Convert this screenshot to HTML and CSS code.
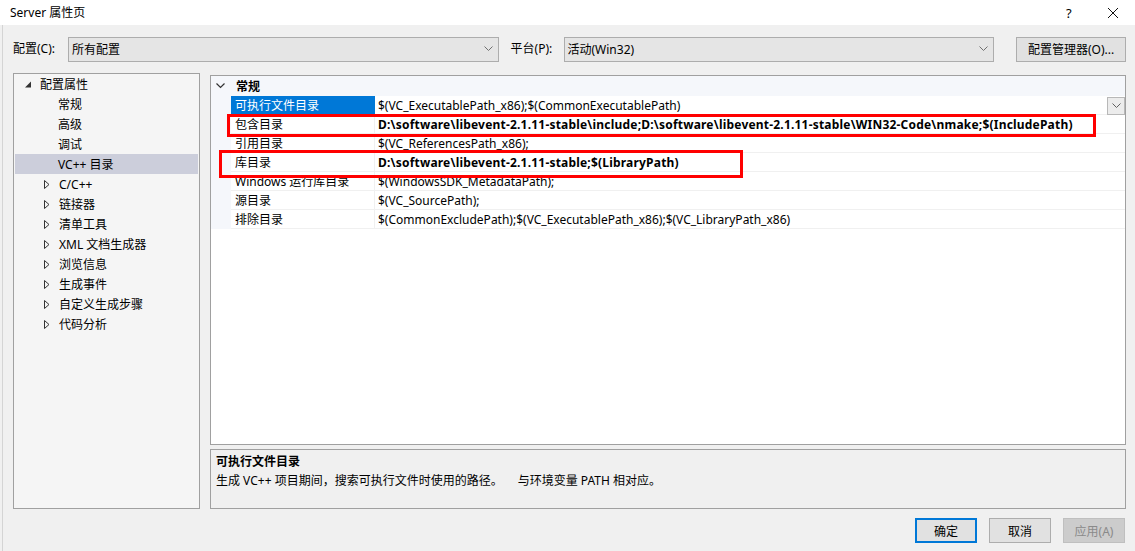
FILE: index.html
```html
<!DOCTYPE html>
<html lang="zh-CN">

<head>
    <meta charset="UTF-8">
    <title>Server 属性页</title>
    <link rel="stylesheet" href="styles.css">
</head>

<body>
    <div class="titlebar">
        <span class="title">Server 属性页</span>
        <span class="help">?</span>
        <span class="close">
            <svg width="12" height="12" viewBox="0 0 12 12"><path d="M1 1L11 11M11 1L1 11" stroke="#111" stroke-width="1" fill="none"/></svg>
        </span>
    </div>
    <div class="window">
        <div class="config-row">
            <span class="label label-config">配置(C):</span>
            <div class="combo">
                <span>所有配置</span>
                <svg class="chev" width="9" height="6" viewBox="0 0 9 6"><path d="M0.5 0.5L4.5 4.5L8.5 0.5" stroke="#707070" fill="none"/></svg>
            </div>
            <span class="label label-platform">平台(P):</span>
            <div class="combo">
                <span>活动(Win32)</span>
                <svg class="chev" width="9" height="6" viewBox="0 0 9 6"><path d="M0.5 0.5L4.5 4.5L8.5 0.5" stroke="#707070" fill="none"/></svg>
            </div>
            <button class="btn btn-manager">配置管理器(O)...</button>
        </div>

        <div class="main">
            <div class="tree">
                <div class="tree-row root">
                    <span class="twisty"><svg width="7" height="7" viewBox="0 0 7 7"><path d="M6 0.5V6.5H0Z" fill="#333"/></svg></span>
                    <span>配置属性</span>
                </div>
                <div class="tree-row leaf">常规</div>
                <div class="tree-row leaf">高级</div>
                <div class="tree-row leaf">调试</div>
                <div class="tree-row leaf selected">VC++ 目录</div>
                <div class="tree-row child"><span class="twisty"><svg width="6" height="9" viewBox="0 0 6 9"><path d="M0.5 0.5L5 4.5L0.5 8.5Z" stroke="#333" fill="none"/></svg></span><span>C/C++</span></div>
                <div class="tree-row child"><span class="twisty"><svg width="6" height="9" viewBox="0 0 6 9"><path d="M0.5 0.5L5 4.5L0.5 8.5Z" stroke="#333" fill="none"/></svg></span><span>链接器</span></div>
                <div class="tree-row child"><span class="twisty"><svg width="6" height="9" viewBox="0 0 6 9"><path d="M0.5 0.5L5 4.5L0.5 8.5Z" stroke="#333" fill="none"/></svg></span><span>清单工具</span></div>
                <div class="tree-row child"><span class="twisty"><svg width="6" height="9" viewBox="0 0 6 9"><path d="M0.5 0.5L5 4.5L0.5 8.5Z" stroke="#333" fill="none"/></svg></span><span>XML 文档生成器</span></div>
                <div class="tree-row child"><span class="twisty"><svg width="6" height="9" viewBox="0 0 6 9"><path d="M0.5 0.5L5 4.5L0.5 8.5Z" stroke="#333" fill="none"/></svg></span><span>浏览信息</span></div>
                <div class="tree-row child"><span class="twisty"><svg width="6" height="9" viewBox="0 0 6 9"><path d="M0.5 0.5L5 4.5L0.5 8.5Z" stroke="#333" fill="none"/></svg></span><span>生成事件</span></div>
                <div class="tree-row child"><span class="twisty"><svg width="6" height="9" viewBox="0 0 6 9"><path d="M0.5 0.5L5 4.5L0.5 8.5Z" stroke="#333" fill="none"/></svg></span><span>自定义生成步骤</span></div>
                <div class="tree-row child"><span class="twisty"><svg width="6" height="9" viewBox="0 0 6 9"><path d="M0.5 0.5L5 4.5L0.5 8.5Z" stroke="#333" fill="none"/></svg></span><span>代码分析</span></div>
            </div>

            <div class="right">
                <div class="grid">
                    <div class="grid-header">
                        <span class="gutter"><svg width="9" height="6" viewBox="0 0 9 6"><path d="M0.5 0.5L4.5 4.5L8.5 0.5" stroke="#333" stroke-width="1.2" fill="none"/></svg></span>
                        <span class="cat">常规</span>
                    </div>
                    <div class="prop active">
                        <span class="gutter"></span>
                        <span class="name">可执行文件目录</span>
                        <span class="value">$(VC_ExecutablePath_x86);$(CommonExecutablePath)</span>
                        <span class="drop"><svg width="9" height="6" viewBox="0 0 9 6"><path d="M0.5 0.5L4.5 4.5L8.5 0.5" stroke="#606060" fill="none"/></svg></span>
                    </div>
                    <div class="prop">
                        <span class="gutter"></span>
                        <span class="name">包含目录</span>
                        <span class="value bold">D:\software\libevent-2.1.11-stable\include;D:\software\libevent-2.1.11-stable\WIN32-Code\nmake;$(IncludePath)</span>
                    </div>
                    <div class="prop">
                        <span class="gutter"></span>
                        <span class="name">引用目录</span>
                        <span class="value">$(VC_ReferencesPath_x86);</span>
                    </div>
                    <div class="prop">
                        <span class="gutter"></span>
                        <span class="name">库目录</span>
                        <span class="value bold">D:\software\libevent-2.1.11-stable;$(LibraryPath)</span>
                    </div>
                    <div class="prop">
                        <span class="gutter"></span>
                        <span class="name">Windows 运行库目录</span>
                        <span class="value">$(WindowsSDK_MetadataPath);</span>
                    </div>
                    <div class="prop">
                        <span class="gutter"></span>
                        <span class="name">源目录</span>
                        <span class="value">$(VC_SourcePath);</span>
                    </div>
                    <div class="prop">
                        <span class="gutter"></span>
                        <span class="name">排除目录</span>
                        <span class="value">$(CommonExcludePath);$(VC_ExecutablePath_x86);$(VC_LibraryPath_x86)</span>
                    </div>
                    <!-- 标注框 -->
                    <div class="mark mark-include"></div>
                    <div class="mark mark-lib"></div>
                </div>
                <div class="desc">
                    <div class="desc-title">可执行文件目录</div>
                    <div class="desc-text">生成 VC++ 项目期间，搜索可执行文件时使用的路径。<span class="sp"></span>与环境变量 PATH 相对应。</div>
                </div>
            </div>
        </div>

        <div class="footer">
            <button class="btn btn-ok">确定</button>
            <button class="btn">取消</button>
            <button class="btn btn-disabled">应用(A)</button>
        </div>
    </div>
</body>

</html>
```

FILE: styles.css
```css
* {
    margin: 0;
    padding: 0;
    box-sizing: border-box;
}

body {
    width: 1135px;
    height: 551px;
    overflow: hidden;
    background-color: #f0f0f0;
    font-family: "Noto Sans", "Noto Sans CJK SC", sans-serif;
    font-size: 12px;
    color: #000;
}

.titlebar {
    height: 25px;
    background-color: #fff;
    display: flex;
    align-items: center;
    padding-left: 10px;
}

.titlebar .title {
    flex: 1;
    line-height: 20px;
}

.titlebar .help {
    width: 20px;
    margin-right: 21px;
    font-size: 13px;
}

.titlebar .close {
    width: 28px;
    display: flex;
}

.window {
    height: 526px;
    margin-left: 2px;
    border-left: 1px solid #d4d4d4;
    padding: 0 9px 0 10px;
}

/* 顶部配置栏 */
.config-row {
    display: flex;
    align-items: center;
    height: 48px;
}

.label {
    line-height: 24px;
}

.label-config {
    width: 55px;
}

.label-platform {
    width: 53px;
    margin-left: 12px;
}

.combo {
    width: 431px;
    height: 25px;
    background-color: #e5e5e5;
    border: 1px solid #adadad;
    display: flex;
    align-items: center;
    justify-content: space-between;
    padding: 0 5px 0 3px;
}

.btn {
    height: 25px;
    width: 62px;
    background-color: #e1e1e1;
    border: 1px solid #adadad;
    font-family: inherit;
    font-size: 12px;
    color: #000;
}

.btn-manager {
    width: 110px;
    margin-left: 22px;
}

/* 主体 */
.main {
    display: flex;
    gap: 10px;
    height: 436px;
}

.tree {
    width: 187px;
    height: 436px;
    background-color: #f5f5f5;
    border: 1px solid #a0a0a0;
    padding: 0 1px;
}

.tree-row {
    height: 20px;
    display: flex;
    align-items: center;
    white-space: nowrap;
}

.tree-row .twisty {
    width: 15px;
    display: flex;
    align-items: center;
}

.tree-row.root {
    padding-left: 10px;
}

.tree-row.leaf {
    padding-left: 43px;
}

.tree-row.child {
    padding-left: 29px;
}

.tree-row.selected {
    background-color: #cccedb;
}

.right {
    flex: 1;
    padding-top: 2px;
    display: flex;
    flex-direction: column;
    gap: 4px;
}

.grid {
    position: relative;
    height: 371px;
    background-color: #fff;
    border: 1px solid #a0a0a0;
}

.grid-header,
.prop {
    display: flex;
    align-items: center;
    white-space: nowrap;
}

.grid-header {
    height: 20px;
    background-color: #f5f7fb;
}

.grid-header .cat {
    font-weight: bold;
    padding-left: 5px;
}

.gutter {
    width: 20px;
    height: 100%;
    background-color: #f5f7fb;
    display: flex;
    align-items: center;
    justify-content: center;
    padding-right: 2px;
}

.prop {
    height: 19px;
}

.prop .name {
    width: 144px;
    height: 100%;
    line-height: 20px;
    padding-left: 4px;
    border-bottom: 1px solid #f0f0f0;
    border-right: 1px solid #f0f0f0;
}

.prop.active .name {
    background-color: #0078d7;
    color: #fff;
    border-color: #0078d7;
}

.prop .value {
    flex: 1;
    height: 100%;
    line-height: 20px;
    padding-left: 3px;
    border-bottom: 1px solid #f0f0f0;
    overflow: hidden;
}

.prop .value.bold {
    font-weight: bold;
    letter-spacing: 0.2px;
}

.prop .drop {
    width: 18px;
    height: 18px;
    border: 1px solid #b8b8b8;
    background-color: #ececec;
    display: flex;
    align-items: center;
    justify-content: center;
}

.mark {
    position: absolute;
    border: 3px solid #ff0000;
}

.mark-include {
    left: 16px;
    top: 38px;
    width: 869px;
    height: 23px;
}

.mark-lib {
    left: 8px;
    top: 74px;
    width: 524px;
    height: 28px;
}

.desc {
    height: 60px;
    border: 1px solid #a0a0a0;
    padding: 2px 5px;
    line-height: 19px;
}

.desc-title {
    font-weight: bold;
}

.desc-text .sp {
    display: inline-block;
    width: 15px;
}

.footer {
    display: flex;
    justify-content: flex-end;
    gap: 12px;
    padding-top: 9px;
    padding-right: 1px;
}

.btn-ok {
    border: 2px solid #0078d7;
}

.btn-disabled {
    background-color: #cccccc;
    border-color: #bfbfbf;
    color: #8a8a8a;
}
```
